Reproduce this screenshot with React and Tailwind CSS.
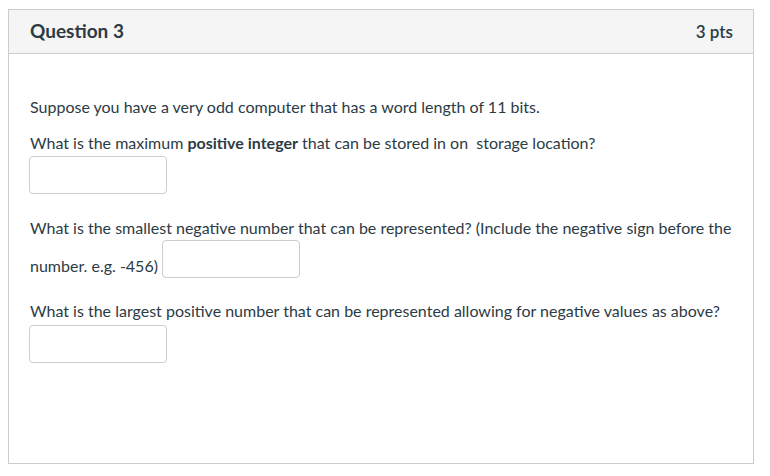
const Blank = ({ className = "" }) => (
  <input
    type="text"
    className={`block w-[138px] h-[38px] border border-[#c7cdd1] rounded-[4px] bg-white ${className}`}
  />
);

export default function App() {
  return (
    <div className="w-[770px] h-[476px] bg-white pl-2 pt-[9px] font-['Lato','Liberation_Sans',sans-serif] text-[#2d3b45]">
      <div className="w-[746px] h-[455px] border border-[#c7cdd1] flex flex-col">
        <div className="h-[44px] bg-[#f5f5f5] border-b border-[#c7cdd1] flex items-center justify-between pl-[21px] pr-[20px]">
          <h2 className="text-[19px] font-bold">Question 3</h2>
          <span className="text-[17px] font-semibold">3 pts</span>
        </div>

        <div className="px-[21px] pt-[41px] text-[16px] leading-[24px]">
          <p>Suppose you have a very odd computer that has a word length of 11 bits.</p>
          <p className="mt-[12px]">
            What is the maximum <strong>positive integer</strong> that can be stored in on&nbsp; storage location?
          </p>
          <Blank className="mt-[1px] -ml-px" />

          <p className="mt-[22px] whitespace-nowrap">
            What is the smallest negative number that can be represented? (Include the negative sign before the
          </p>
          <div className="flex items-end">
            <span>number. e.g. -456)</span>
            <Blank className="ml-[4px]" />
          </div>

          <p className="mt-[21px]">
            What is the largest positive number that can be represented allowing for negative values as above?
          </p>
          <Blank className="mt-[2px] -ml-px" />
        </div>
      </div>
    </div>
  );
}
